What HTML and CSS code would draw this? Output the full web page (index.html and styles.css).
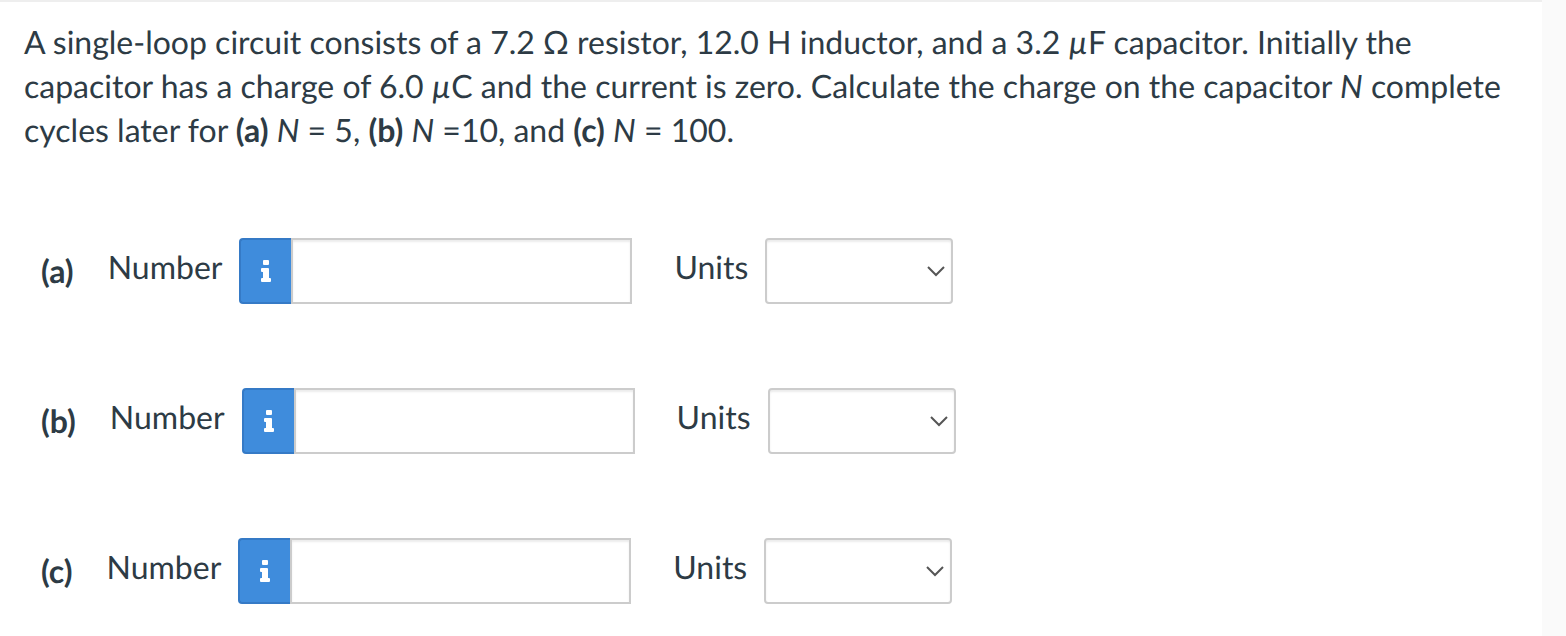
FILE: index.html
```html
<!DOCTYPE html>
<html lang="en">
<head>
  <meta charset="UTF-8" />
  <title>Single-loop circuit</title>
  <meta name="viewport" content="width=device-width, initial-scale=1.0" />
  <link rel="stylesheet" href="styles.css">
</head>
<body>
  <main class="question">
    <p class="prompt">A single-loop circuit consists of a 7.2 Ω resistor, 12.0 H inductor, and a 3.2 <i>µ</i>F capacitor. Initially the capacitor has a charge of 6.0 <i>µ</i>C and the current is zero. Calculate the charge on the capacitor <i>N</i> complete cycles later for <b>(a)</b> <i>N</i> = 5, <b>(b)</b> <i>N</i> =10, and <b>(c)</b> <i>N</i> = 100.</p>

    <form class="answers">
      <div class="row">
        <b class="part">(a)</b>
        <label class="number-label" for="numberA">Number</label>
        <div class="number">
          <button type="button" class="info" aria-label="Information"><svg viewBox="0 0 10 22"><path d="M3 0h4q1 0 1 1v3q0 1-1 1H3q-1 0-1-1V1q0-1 1-1zM1 8h6q1 0 1 1v9h1q1 0 1 1v2q0 1-1 1H1q-1 0-1-1v-2q0-1 1-1h1v-6H1q-1 0-1-1V9q0-1 1-1z"/></svg></button>
          <input type="text" id="numberA" />
        </div>
        <label class="units-label" for="unitsA">Units</label>
        <div class="units">
          <select id="unitsA"><option></option></select>
          <svg class="chevron" viewBox="0 0 18 11"><path d="M1 1l8 8 8-8"/></svg>
        </div>
      </div>
      <div class="row">
        <b class="part">(b)</b>
        <label class="number-label" for="numberB">Number</label>
        <div class="number">
          <button type="button" class="info" aria-label="Information"><svg viewBox="0 0 10 22"><path d="M3 0h4q1 0 1 1v3q0 1-1 1H3q-1 0-1-1V1q0-1 1-1zM1 8h6q1 0 1 1v9h1q1 0 1 1v2q0 1-1 1H1q-1 0-1-1v-2q0-1 1-1h1v-6H1q-1 0-1-1V9q0-1 1-1z"/></svg></button>
          <input type="text" id="numberB" />
        </div>
        <label class="units-label" for="unitsB">Units</label>
        <div class="units">
          <select id="unitsB"><option></option></select>
          <svg class="chevron" viewBox="0 0 18 11"><path d="M1 1l8 8 8-8"/></svg>
        </div>
      </div>
      <div class="row">
        <b class="part">(c)</b>
        <label class="number-label" for="numberC">Number</label>
        <div class="number">
          <button type="button" class="info" aria-label="Information"><svg viewBox="0 0 10 22"><path d="M3 0h4q1 0 1 1v3q0 1-1 1H3q-1 0-1-1V1q0-1 1-1zM1 8h6q1 0 1 1v9h1q1 0 1 1v2q0 1-1 1H1q-1 0-1-1v-2q0-1 1-1h1v-6H1q-1 0-1-1V9q0-1 1-1z"/></svg></button>
          <input type="text" id="numberC" />
        </div>
        <label class="units-label" for="unitsC">Units</label>
        <div class="units">
          <select id="unitsC"><option></option></select>
          <svg class="chevron" viewBox="0 0 18 11"><path d="M1 1l8 8 8-8"/></svg>
        </div>
      </div>
    </form>
  </main>
</body>
</html>
```

FILE: styles.css
```css
* {
  box-sizing: border-box;
}

body {
  margin: 0;
  background-color: #fafafa;
  color: #2d3b45;
  font-family: Lato, sans-serif;
  font-size: 32px;
  line-height: 44px;
  font-variant-ligatures: none;
  text-rendering: geometricPrecision;
}

.question {
  min-height: 100vh;
  margin-right: 24px;
  padding: 18px 24px 32px;
  border-top: 2px solid #eeeeee;
  background-color: #fff;
}

.prompt {
  margin: 0 0 86px;
}

.answers {
  display: flex;
  flex-direction: column;
  gap: 84px;
  padding-left: 17px;
}

.row {
  display: flex;
  align-items: center;
}

.part {
  margin-right: 34px;
}

.number-label,
.units-label {
  margin-right: 17px;
  padding-bottom: 8px;
}

.number {
  display: flex;
  margin-right: 42px;
}

.info {
  display: flex;
  align-items: center;
  justify-content: center;
  width: 52px;
  height: 66px;
  padding: 0;
  border: 2px solid #357ac6;
  border-right-width: 0;
  border-radius: 4px 0 0 4px;
  background-color: #3f8cdc;
}

.info svg {
  width: 10px;
  height: 22px;
  fill: #fff;
}

input,
select {
  height: 66px;
  border: 2px solid #cccccc;
  background-color: #fff;
  box-shadow: inset 0 2px 2px rgba(0, 0, 0, 0.08);
  color: inherit;
  font: inherit;
}

input {
  width: 341px;
  padding: 0 12px;
  border-radius: 0;
}

.units {
  display: grid;
  align-items: center;
}

select {
  grid-area: 1 / 1;
  width: 188px;
  padding: 0 40px 0 12px;
  border-radius: 4px;
  appearance: none;
}

.chevron {
  grid-area: 1 / 1;
  justify-self: end;
  width: 18px;
  height: 11px;
  margin-right: 8px;
  fill: none;
  stroke: #555555;
  stroke-width: 2;
  pointer-events: none;
}
```
